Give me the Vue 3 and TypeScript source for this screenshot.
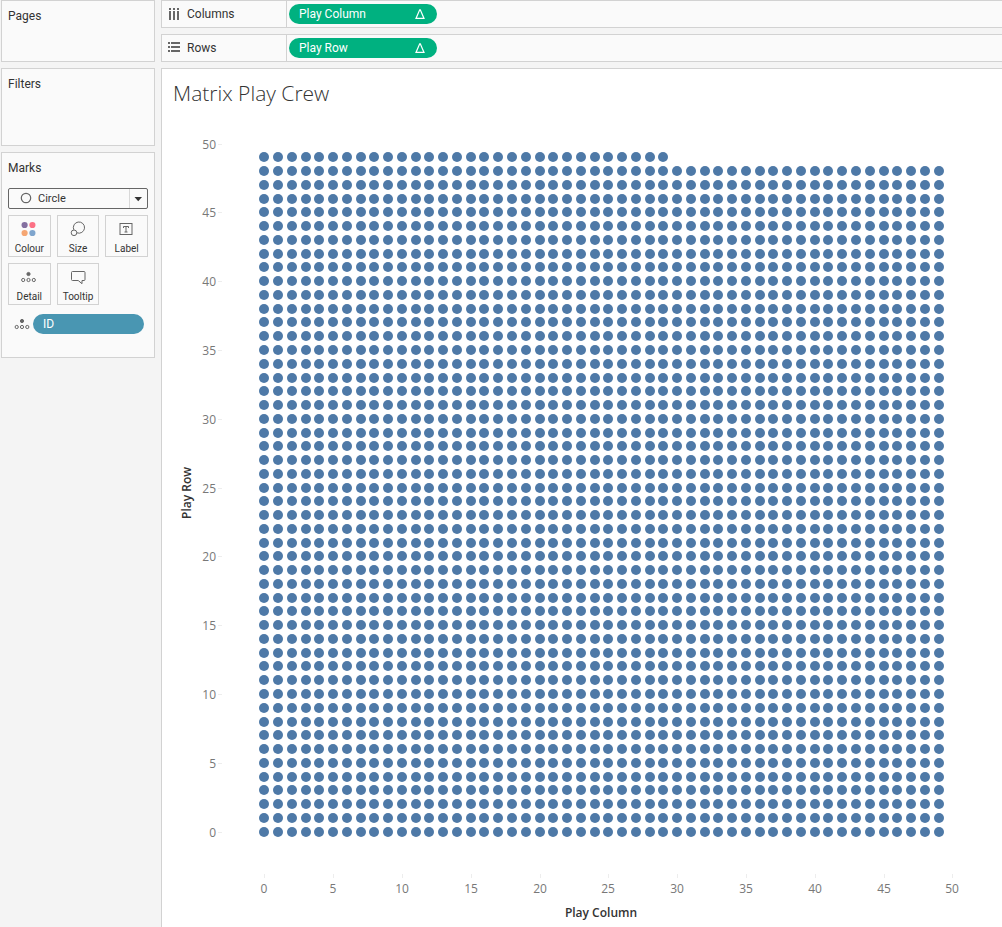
<script setup lang="ts">
import { ref } from 'vue'

interface Point { id: number; x: number; y: number }
interface Tick { value: number; pos: number }

const markType = ref('Circle')

const shelves = [
  { name: 'Columns', field: 'Play Column' },
  { name: 'Rows', field: 'Play Row' },
]
const cards = ['Colour', 'Size', 'Label', 'Detail', 'Tooltip']

const total = 2480
const perRow = 50
const step = 13.76
const scaleX = (v: number): number => Math.round(102.3 + v * step)
const scaleY = (v: number): number => Math.round(714.6 - v * step)

const points: Point[] = Array.from({ length: total }, (_, id) => ({
  id,
  x: scaleX(id % perRow),
  y: scaleY(Math.floor(id / perRow)),
}))

const values = Array.from({ length: 11 }, (_, i) => i * 5)
const xTicks: Tick[] = values.map((value) => ({ value, pos: scaleX(value) }))
const yTicks: Tick[] = values.map((value) => ({ value, pos: scaleY(value) }))
</script>

<template>
  <div class="workspace">
    <aside class="side">
      <section class="panel pages"><h2>Pages</h2></section>
      <section class="panel filters"><h2>Filters</h2></section>
      <section class="panel marks">
        <h2>Marks</h2>
        <div class="mark-type">
          <svg class="ring" viewBox="0 0 12 12" aria-hidden="true"><circle cx="6" cy="6" r="4.7" /></svg>
          <select v-model="markType" aria-label="Mark type">
            <option>Circle</option>
            <option>Square</option>
            <option>Bar</option>
            <option>Line</option>
          </select>
          <svg class="arrow" viewBox="0 0 18 19" aria-hidden="true">
            <path class="rule" d="M.5 0V19" />
            <path class="caret" d="M5.5 8h7.5L9.2 12.2z" />
          </svg>
        </div>
        <div class="cards">
          <button v-for="card in cards" :key="card" type="button" class="card">
            <svg viewBox="0 0 20 20" class="glyph" aria-hidden="true">
              <g v-if="card === 'Colour'" class="flat">
                <circle cx="5.6" cy="6" r="3.1" fill="#8470a0" />
                <circle cx="13.4" cy="6" r="3.1" fill="#fc7185" />
                <circle cx="5.6" cy="14" r="3.1" fill="#f5a673" />
                <circle cx="13.4" cy="14" r="3.1" fill="#7fa5cd" />
              </g>
              <g v-else-if="card === 'Size'">
                <path d="M5.8 10.8A5.6 5.6 0 1 1 8.9 13.8" />
                <circle cx="6" cy="13.8" r="2.8" />
              </g>
              <g v-else-if="card === 'Label'">
                <rect x="3" y="4.5" width="12" height="11" />
                <path d="M6.5 9V7.5h5V9M9 7.5v5.5M7.5 13h3" />
              </g>
              <g v-else-if="card === 'Detail'">
                <circle class="solid" cx="9.5" cy="7" r="1.6" />
                <circle cx="4.2" cy="13" r="1.6" />
                <circle cx="9.5" cy="13" r="1.6" />
                <circle cx="14.8" cy="13" r="1.6" />
              </g>
              <g v-else>
                <path d="M4.5 4.5h11.5q1 0 1 1v7q0 1-1 1h-2v3.2l-3.8-3.2H4.5q-1 0-1-1v-7q0-1 1-1z" />
              </g>
            </svg>
            <span>{{ card }}</span>
          </button>
        </div>
        <div class="detail-row">
          <svg viewBox="0 0 20 20" class="glyph" aria-hidden="true">
            <circle class="solid" cx="10" cy="7" r="1.6" />
            <circle cx="4.7" cy="13" r="1.6" />
            <circle cx="10" cy="13" r="1.6" />
            <circle cx="15.3" cy="13" r="1.6" />
          </svg>
          <button type="button" class="pill id-pill">ID</button>
        </div>
      </section>
    </aside>

    <main class="main">
      <section v-for="shelf in shelves" :key="shelf.name" class="shelf">
        <div class="shelf-name">
          <svg viewBox="0 0 12 12" class="shelf-icon" aria-hidden="true">
            <path v-if="shelf.name === 'Columns'" d="M1 0h2v2H1zM5 0h2v2H5zM9 0h2v2H9zM1 3h2v9H1zM5 3h2v9H5zM9 3h2v9H9z" />
            <path v-else d="M0 0h2v2H0zM0 4h2v2H0zM0 8h2v2H0zM3 0h9v2H3zM3 4h9v2H3zM3 8h9v2H3z" />
          </svg>
          <h2>{{ shelf.name }}</h2>
        </div>
        <button type="button" class="pill field-pill">
          <span>{{ shelf.field }}</span>
          <svg viewBox="0 0 10 10" class="delta" aria-hidden="true"><path d="M4.7.8h.6L9 9.4H1z" /></svg>
        </button>
      </section>

      <section class="view">
        <h1>Matrix Play Crew</h1>
        <svg class="chart" viewBox="0 0 840 808" role="img" aria-label="Play Row by Play Column">
          <g class="y-axis">
            <template v-for="t in yTicks" :key="t.value">
              <path class="tick" :d="`M56 ${t.pos + 0.5}h4`" />
              <text x="54" :y="t.pos + 5" text-anchor="end">{{ t.value }}</text>
            </template>
          </g>
          <g class="x-axis">
            <template v-for="t in xTicks" :key="t.value">
              <path class="tick" :d="`M${t.pos + 0.5} 757v4`" />
              <text :x="t.pos" y="776" text-anchor="middle">{{ t.value }}</text>
            </template>
          </g>
          <g class="dots">
            <circle v-for="p in points" :key="p.id" :cx="p.x" :cy="p.y" r="5" />
          </g>
          <text class="axis-title" x="439" y="800" text-anchor="middle">Play Column</text>
          <text class="axis-title" transform="translate(29 376) rotate(-90)" text-anchor="middle">Play Row</text>
        </svg>
      </section>
    </main>
  </div>
</template>

<style>
body {
  margin: 0;
  background: #f4f4f4;
}
</style>

<style scoped>
.workspace {
  display: grid;
  grid-template-columns: 154px minmax(0, 1fr);
  gap: 6px;
  min-height: 100vh;
  padding-left: 1px;
  box-sizing: border-box;
  background: #f4f4f4;
  color: #333;
  font: 12px/16px Roboto, "Liberation Sans", sans-serif;
}
.workspace * {
  box-sizing: border-box;
}
h1,
h2 {
  margin: 0;
  font-weight: 400;
}
h2 {
  font-size: 12px;
}
button,
select {
  margin: 0;
  font-family: inherit;
  color: inherit;
}
.side,
.main {
  display: flex;
  flex-direction: column;
  gap: 6px;
}
.panel {
  padding: 7px 6px;
  border: 1px solid #d2d2d2;
  background: #fafafa;
}
.pages {
  min-height: 62px;
}
.filters {
  min-height: 78px;
}
.marks {
  min-height: 206px;
}
.mark-type {
  position: relative;
  height: 21px;
  margin-top: 12px;
}
.mark-type select {
  display: block;
  width: 100%;
  height: 100%;
  padding: 0 20px 0 29px;
  border: 1px solid #666;
  border-radius: 2px;
  background: #fafafa;
  font-size: 11px;
  appearance: none;
}
.ring {
  position: absolute;
  left: 12px;
  top: 4px;
  width: 12px;
  height: 12px;
  fill: none;
  stroke: #666;
  stroke-width: 1.2;
  pointer-events: none;
}
.arrow {
  position: absolute;
  right: 1px;
  top: 1px;
  width: 18px;
  height: 19px;
  pointer-events: none;
}
.rule {
  stroke: #d8d8d8;
}
.caret {
  fill: #333;
}
.cards {
  display: grid;
  grid-template-columns: repeat(3, 1fr);
  gap: 6px;
  margin-top: 6px;
}
.card {
  display: flex;
  flex-direction: column;
  align-items: center;
  gap: 2px;
  height: 42px;
  padding: 3px 0 0;
  border: 1px solid #d2d2d2;
  background: #fafafa;
  font-size: 10px;
  line-height: 16px;
  white-space: nowrap;
}
.glyph {
  flex: none;
  width: 20px;
  height: 20px;
  fill: none;
  stroke: #666;
}
.flat {
  stroke: none;
}
.solid {
  fill: #666;
}
.detail-row {
  display: flex;
  align-items: center;
  gap: 1px;
  margin-top: 9px;
  padding: 0 4px;
}
.pill {
  height: 20px;
  padding: 0 10px;
  border: 0;
  border-radius: 10px;
  color: #fff;
  font-size: 12px;
  line-height: 20px;
  text-align: left;
}
.id-pill {
  flex: 1;
  background: #4996b2;
}
.shelf {
  display: flex;
  align-items: center;
  height: 28px;
  border: 1px solid #d2d2d2;
  border-right: 0;
  background: #fafafa;
}
.shelf-name {
  display: flex;
  align-items: center;
  gap: 7px;
  width: 125px;
  height: 100%;
  padding-left: 6px;
  border-right: 1px solid #d2d2d2;
}
.shelf-icon {
  width: 12px;
  height: 12px;
  fill: #666;
}
.field-pill {
  display: flex;
  align-items: center;
  justify-content: space-between;
  width: 148px;
  margin-left: 2px;
  padding-right: 12px;
  background: #00b180;
}
.delta {
  width: 10px;
  height: 10px;
  fill: none;
  stroke: #fff;
  stroke-width: 1.2;
}
.view {
  flex: 1;
  border: solid #d2d2d2;
  border-width: 1px 0 0 1px;
  background: #fff;
}
h1 {
  height: 48px;
  padding: 10px 11px 0;
  font: 300 21px/28px "Open Sans", "Noto Sans", sans-serif;
}
.chart {
  display: block;
  width: 100%;
  height: auto;
  font: 12px "Open Sans", "Noto Sans", sans-serif;
  fill: #787878;
}
.tick {
  stroke: #ededed;
}
.dots {
  fill: #4e79a7;
}
.axis-title {
  fill: #333;
  font-weight: 600;
}
</style>
